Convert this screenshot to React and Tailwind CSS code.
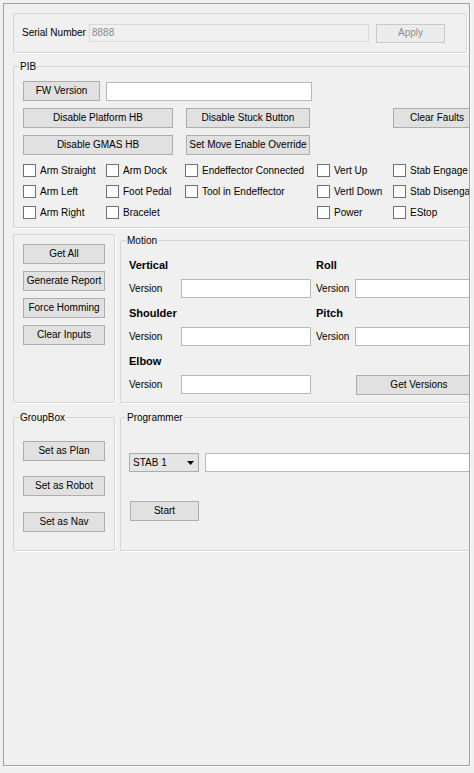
import React from "react";

const btn =
  "h-[20px] border border-[#adadad] bg-[#e1e1e1] text-[10px] leading-none text-black whitespace-nowrap flex items-center justify-center shrink-0";
const input = "h-[19px] border border-[#b9b9b9] bg-white shrink-0";
const group = "border border-[#d5d5d5] rounded-[2px] shadow-[1px_1px_0_#ffffff]";
const legend = "px-[1px] h-[12px] leading-[14px]";

function Btn({ w, children }) {
  return <div className={btn + " " + w}>{children}</div>;
}

function Check({ label, w }) {
  return (
    <div className={"flex items-center shrink-0 " + w}>
      {label ? (
        <>
          <span className="w-[13px] h-[13px] border border-[#707070] bg-white shrink-0" />
          <span className="ml-[4px] whitespace-nowrap">{label}</span>
        </>
      ) : null}
    </div>
  );
}

function CheckRow({ items }) {
  const widths = ["w-[83px]", "w-[79px]", "w-[132px]", "w-[76px]", "w-[110px]"];
  return (
    <div className="flex h-[21px] items-center">
      {items.map((it, i) => (
        <Check key={i} label={it} w={widths[i]} />
      ))}
    </div>
  );
}

function MotionBlock({ left, right }) {
  return (
    <div>
      <div className="flex h-[20px] items-center font-bold text-[11px]">
        <div className="w-[187px] shrink-0">{left}</div>
        <div>{right}</div>
      </div>
      <div className="mt-[4px] flex h-[19px] items-center">
        <div className="w-[52px] shrink-0">Version</div>
        <div className={input + " w-[130px]"} />
        <div className="ml-[5px] flex items-center">
          {right ? (
            <>
              <div className="w-[39px] shrink-0">Version</div>
              <div className={input + " w-[160px]"} />
            </>
          ) : (
            <div className="pl-[40px]">
              <Btn w="w-[126px]">Get Versions</Btn>
            </div>
          )}
        </div>
      </div>
    </div>
  );
}

export default function App() {
  return (
    <div className="w-[474px] h-[773px] bg-[#f0f0f0] pl-[3px] pt-[3px] font-['Liberation_Sans',Arial,sans-serif] text-[10px] leading-[12px] text-black">
      <div className="w-[467px] h-[763px] border border-[#a0a0a0] shadow-[1px_1px_0_#ffffff] overflow-hidden">
        <div className="w-[560px] pl-[9px] pt-[9px] flex flex-col">
          {/* Serial number */}
          <div className={group + " w-[454px] h-[40px] flex items-center pl-[8px]"}>
            <div className="w-[67px] whitespace-nowrap shrink-0">Serial Number</div>
            <div className="w-[280px] h-[18px] border border-[#d9d9d9] bg-[#f0f0f0] text-[#8a8a8a] pl-[2px] flex items-center shrink-0">
              8888
            </div>
            <div className="ml-[7px] w-[69px] h-[19px] border border-[#c9c9c9] bg-[#ececec] text-[#8d8d8d] flex items-center justify-center shrink-0">
              Apply
            </div>
          </div>

          {/* PIB */}
          <fieldset className={group + " mt-[7px] w-[520px] pl-[5px] pb-[4px]"}>
            <legend className={legend}>PIB</legend>
            <div className="pl-[4px] pt-[9px]">
              <div className="flex items-center">
                <Btn w="w-[77px]">FW Version</Btn>
                <div className={input + " ml-[6px] w-[206px]"} />
              </div>
              <div className="mt-[7px] flex items-center">
                <Btn w="w-[150px]">Disable Platform HB</Btn>
                <div className="ml-[13px]">
                  <Btn w="w-[124px]">Disable Stuck Button</Btn>
                </div>
                <div className="ml-[83px]">
                  <Btn w="w-[88px]">Clear Faults</Btn>
                </div>
              </div>
              <div className="mt-[7px] flex items-center">
                <Btn w="w-[150px]">Disable GMAS HB</Btn>
                <div className="ml-[13px]">
                  <Btn w="w-[124px]">Set Move Enable Override</Btn>
                </div>
              </div>
              <div className="mt-[5px]">
                <CheckRow items={["Arm Straight", "Arm Dock", "Endeffector Connected", "Vert Up", "Stab Engage"]} />
                <CheckRow items={["Arm Left", "Foot Pedal", "Tool in Endeffector", "Vertl Down", "Stab Disengage"]} />
                <CheckRow items={["Arm Right", "Bracelet", "", "Power", "EStop"]} />
              </div>
            </div>
          </fieldset>

          {/* Middle row */}
          <div className="mt-[6px] w-[520px] flex gap-[5px] items-stretch">
            <div className={group + " w-[102px] shrink-0 pt-[9px] pl-[9px] flex flex-col gap-[7px]"}>
              <Btn w="w-[82px]">Get All</Btn>
              <Btn w="w-[82px]">Generate Report</Btn>
              <Btn w="w-[82px]">Force Homming</Btn>
              <Btn w="w-[82px]">Clear Inputs</Btn>
            </div>
            <fieldset className={group + " flex-1 min-w-0 pl-[5px] pb-[8px]"}>
              <legend className={legend}>Motion</legend>
              <div className="pl-[3px] pt-[9px] flex flex-col gap-[5px]">
                <MotionBlock left="Vertical" right="Roll" />
                <MotionBlock left="Shoulder" right="Pitch" />
                <MotionBlock left="Elbow" right="" />
              </div>
            </fieldset>
          </div>

          {/* Bottom row */}
          <div className="mt-[8px] w-[520px] flex gap-[5px] items-stretch">
            <fieldset className={group + " w-[102px] shrink-0 pl-[5px] pb-[18px]"}>
              <legend className={legend}>GroupBox</legend>
              <div className="pl-[4px] pt-[18px] flex flex-col">
                <Btn w="w-[82px]">Set as Plan</Btn>
                <div className="mt-[15px]">
                  <Btn w="w-[82px]">Set as Robot</Btn>
                </div>
                <div className="mt-[16px]">
                  <Btn w="w-[82px]">Set as Nav</Btn>
                </div>
              </div>
            </fieldset>
            <fieldset className={group + " flex-1 min-w-0 pl-[5px]"}>
              <legend className={legend}>Programmer</legend>
              <div className="pl-[3px] pt-[30px]">
                <div className="flex items-center">
                  <div className="w-[70px] h-[19px] border border-[#acacac] bg-[#e5e5e5] flex items-center pl-[3px] pr-[4px] justify-between shrink-0">
                    <span>STAB 1</span>
                    <svg width="7" height="4" viewBox="0 0 7 4">
                      <path d="M0 0 H7 L3.5 4 Z" fill="#000" />
                    </svg>
                  </div>
                  <div className={input + " ml-[6px] w-[320px]"} />
                </div>
                <div className="mt-[29px] ml-[1px]">
                  <Btn w="w-[69px]">Start</Btn>
                </div>
              </div>
            </fieldset>
          </div>
        </div>
      </div>
    </div>
  );
}
